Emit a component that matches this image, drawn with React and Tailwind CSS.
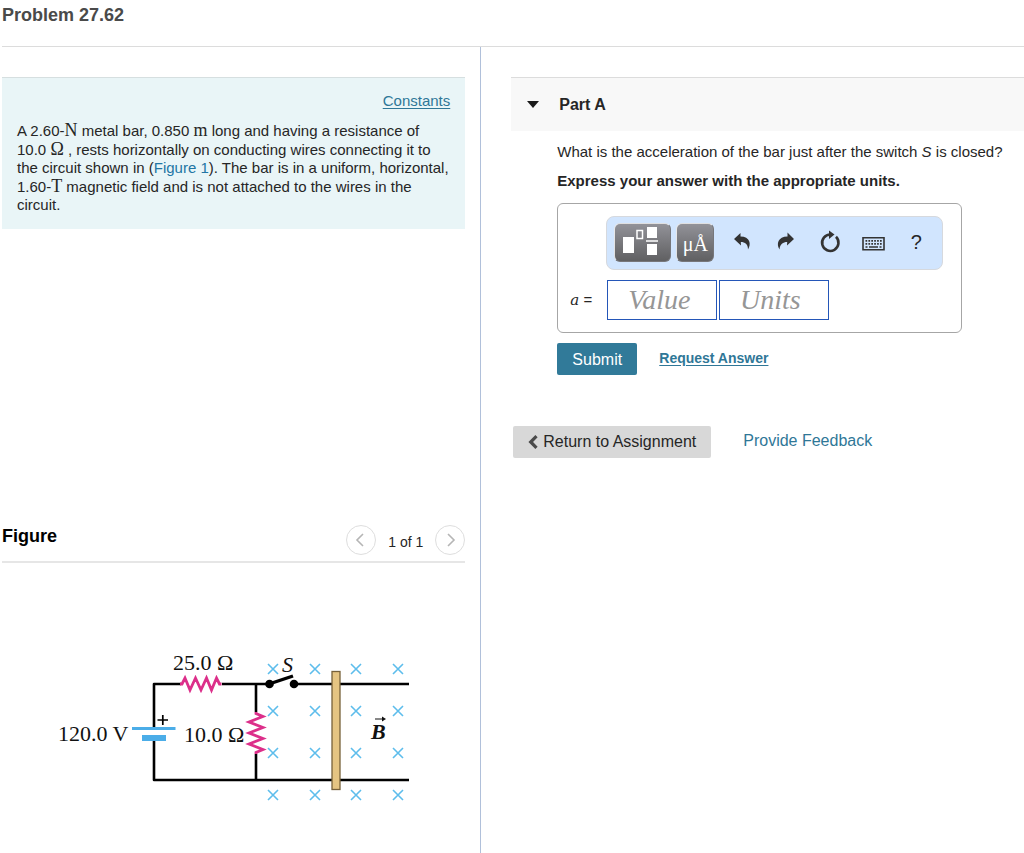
import React from 'react';

const FIELD_XS = [273, 315, 356, 398];
const FIELD_YS = [669, 711, 753, 795];

export default function App() {
  return (
    <div className="min-h-screen flex flex-col bg-white font-['Liberation_Sans',Arial,sans-serif] text-[#262626]">
      <header className="ml-0.5 h-[47px] pt-1 border-b border-[#dcdcdc]">
        <h1 className="text-lg leading-[22px] font-bold text-[#4a4a4a]">Problem 27.62</h1>
      </header>

      <main className="flex flex-1">
        <section className="w-[47%] shrink-0 border-r border-[#b0c0da] pl-0.5 pr-[15px]">
          <div className="min-h-[478px] pt-[30px]">
            <ProblemText />
          </div>
          <FigurePanel />
        </section>

        <section className="flex-1 min-w-0 pt-[30px] pl-[30px]">
          <PartA />
          <div className="mt-[51px] pl-0.5 flex items-center gap-8">
            <button className="h-8 px-[15px] flex items-center rounded-xs bg-[#d8d8d8] text-base">
              <svg width="10" height="14" viewBox="0 0 10 14" className="mr-[5px]" fill="none" stroke="#4a4a4a" strokeWidth="3.2">
                <path d="M8.5 1.2L2.7 7l5.8 5.8" />
              </svg>
              Return to Assignment
            </button>
            <a href="#feedback" className="text-base leading-[18px] pb-0.5 text-[#2f7797]">Provide Feedback</a>
          </div>
        </section>
      </main>
    </div>
  );
}

function Unit({ children }) {
  return <span className="font-['Liberation_Serif',serif] text-lg leading-[18px]">{children}</span>;
}

function ProblemText() {
  return (
    <div className="px-[15px] pt-3.5 pb-[15px] border-t border-[#d6dfe0] bg-[#e9f5f7]">
      <div className="mb-[11px] text-right text-[15px] leading-[18px]">
        <a href="#constants" className="text-[#2f7797] underline underline-offset-2">Constants</a>
      </div>
      <p className="text-[15px] leading-[18px]">
        A 2.60-<Unit>N</Unit> metal bar, 0.850 <Unit>m</Unit> long and having a resistance of
        10.0 <Unit>Ω</Unit> , rests horizontally on conducting wires connecting it to
        the circuit shown in (<a href="#figure" className="text-[#2276a4]">Figure 1</a>). The bar is in a
        uniform, horizontal, 1.60-<Unit>T</Unit> magnetic field and is not attached to the wires in the circuit.
      </p>
    </div>
  );
}

function FigurePanel() {
  return (
    <div id="figure">
      <div className="h-[38px] flex justify-between border-b-2 border-[#e6e6e6]">
        <h2 className="text-lg leading-[22px] font-bold text-black">Figure</h2>
        <div className="flex gap-3">
          <PageButton label="Previous figure" d="M15 7l-6 6 6 6" />
          <span className="pt-2 text-sm leading-[18px]">1 of 1</span>
          <PageButton label="Next figure" d="M11 7l6 6-6 6" />
        </div>
      </div>
      <div className="pt-[87px] flex justify-center">
        <Circuit />
      </div>
    </div>
  );
}

function PageButton({ label, d }) {
  return (
    <button aria-label={label} className="size-[30px] rounded-full border border-[#dedede] flex items-center justify-center">
      <svg width="26" height="26" viewBox="0 0 26 26" fill="none" stroke="#b5b5b5" strokeWidth="1.6">
        <path d={d} />
      </svg>
    </button>
  );
}

function Circuit() {
  return (
    <svg width="358" height="156" viewBox="55 650 358 156" fill="none" className="font-['Liberation_Serif',serif]">
      {/* wires */}
      <g stroke="#000" strokeWidth="2.6" strokeLinejoin="round">
        <path d="M181 684H154V728M154 740V780H409" />
        <path d="M222 684H270M294 684H409" />
        <path d="M256 684V712M256 754V780" />
        <path d="M269 684L293 676" strokeWidth="3.4" />
      </g>
      <circle cx="269.5" cy="684" r="4.3" fill="#000" />
      <circle cx="294" cy="684" r="4.3" fill="#000" />

      {/* resistors */}
      <g stroke="#dc2f8a" strokeWidth="2.8" strokeLinejoin="miter">
        <path d="M180 684h2l3-6 5 12 5.5-12 5.5 12 5.5-12 5 12 5-12 3 6h2" />
        <path d="M256 712v1.5l7 3-14 5.5 14 5.5-14 5.5 14 5.5-14 5.5 14 5.5-7 3v1.5" />
      </g>

      {/* battery */}
      <path d="M132 728.5H175.5" stroke="#4bade8" strokeWidth="3" />
      <path d="M142 738H166" stroke="#4bade8" strokeWidth="6" />
      <path d="M157.5 720H168M162.8 715V725" stroke="#000" strokeWidth="1.7" />

      {/* field into the page */}
      <g stroke="#5dbdec" strokeWidth="1.6">
        {FIELD_YS.map((y) => FIELD_XS.map((x) => (
          <path key={`${x}-${y}`} d={`M${x - 5} ${y - 5}l10 10M${x + 5} ${y - 5}l-10 10`} />
        )))}
      </g>

      {/* bar */}
      <rect x="332" y="671.5" width="8" height="118" fill="#e5c482" stroke="#77613a" strokeWidth="1.3" />

      <g fill="#111" fontSize="22">
        <text x="173" y="670">25.0 Ω</text>
        <text x="58" y="741">120.0 V</text>
        <text x="184" y="742">10.0 Ω</text>
        <text x="282" y="672" fontStyle="italic">S</text>
        <text x="371" y="739" fontStyle="italic" fontWeight="bold">B</text>
      </g>
      <path d="M375 719H384" stroke="#111" strokeWidth="1" />
      <path d="M382 716.5L386 719L382 721.5Z" fill="#111" />
    </svg>
  );
}

function PartA() {
  return (
    <div>
      <h2 className="h-[54px] flex items-center gap-5 pl-4 border-t border-[#dcdcdc] bg-[#f8f8f8] text-base font-bold">
        <button aria-label="Collapse Part A">
          <svg width="12" height="7" viewBox="0 0 12 7" fill="#1a1a1a"><path d="M0 0H12L6 7Z" /></svg>
        </button>
        Part A
      </h2>
      <div className="pt-3 pl-[46px] text-[15px] leading-[18px]">
        <p>What is the acceleration of the bar just after the switch <i>S</i> is closed?</p>
        <p className="mt-[11px] font-bold">Express your answer with the appropriate units.</p>
        <AnswerBox />
        <div className="mt-2.5 flex items-center gap-[22px]">
          <button className="h-8 w-20 rounded-xs bg-[#317a99] pt-px text-base text-white">Submit</button>
          <a href="#answer" className="pb-0.5 text-sm font-bold text-[#2f7797] underline underline-offset-2">Request Answer</a>
        </div>
      </div>
    </div>
  );
}

function AnswerBox() {
  return (
    <div className="mt-[13px] w-full max-w-[405px] rounded-md border border-[#a6a6a6] pt-3 pb-3 pl-3 pr-[18px]">
      <div className="ml-9 h-[54px] px-[7px] pb-0.5 flex items-center rounded-lg border border-[#d6d9de] bg-[#d1e5fe]">
        <button aria-label="Templates" className="w-[57px] h-[39px] mr-[5px] shrink-0 rounded-md border border-t-white/80 border-l-white/80 border-[#77777b] bg-linear-to-b from-[#929298] to-[#606062]">
          <svg width="55" height="37" viewBox="1 1 55 37" fill="none">
            <path d="M9 14h11v16H9zM33 4h10v11H33zM33 21h10v11H33z" fill="#fff" />
            <path d="M32 18h12" stroke="#fff" strokeWidth="1.5" />
            <path d="M23 7.5h5.5v8H23z" stroke="#fff" strokeWidth="1.5" />
          </svg>
        </button>
        <button aria-label="Units" className="w-[38px] h-[39px] mr-1.5 shrink-0 rounded-md border border-t-white/80 border-l-white/80 border-[#77777b] bg-linear-to-b from-[#929298] to-[#606062] pt-1 font-['Liberation_Serif',serif] text-xl leading-6 text-white">
          μÅ
        </button>
        <ToolButton label="Undo">
          <path d="M8.5 1L2 7L9 13.5L8.8 10C13 10 16 12 16 17.5C19.5 12 18 4.5 8.5 4.5Z" fill="#333" />
        </ToolButton>
        <ToolButton label="Redo">
          <path d="M11.5 0.5L18 7L11 13.5L11.2 10C7 10 4 12 3.5 17.5C0 12 2 4.5 11.5 4.5Z" fill="#333" />
        </ToolButton>
        <ToolButton label="Reset">
          <path d="M10.5 2.5A8.2 8.2 0 1 0 16 4.8" stroke="#333" strokeWidth="2.6" />
          <path d="M9 -1.5L14.5 2.5L9 7Z" fill="#333" />
        </ToolButton>
        <ToolButton label="Keyboard">
          <path d="M-1 5.8h21v12h-21z" stroke="#333" strokeWidth="1.6" />
          <path d="M1.5 8.8h16.5M1.5 11.8h16.5" stroke="#333" strokeWidth="1.8" strokeDasharray="1.7 1.2" />
          <path d="M1.5 15h2M5 15h9M15.5 15h2" stroke="#333" strokeWidth="1.5" />
        </ToolButton>
        <button aria-label="Help" className="w-10 shrink-0 text-xl leading-6">?</button>
      </div>
      <div className="mt-2.5 flex items-center">
        <span className="w-[37px] shrink-0 text-[15px]"><i className="font-['DejaVu_Serif',serif]">a</i> =</span>
        <input
          aria-label="Value"
          placeholder="Value"
          className="w-[110px] h-10 mr-0.5 pr-1.5 border border-[#2456b8] text-center font-['Liberation_Serif',serif] italic text-[28px] placeholder:text-[#969696]"
        />
        <input
          aria-label="Units"
          placeholder="Units"
          className="w-[110px] h-10 pr-2 border border-[#2456b8] text-center font-['Liberation_Serif',serif] italic text-[28px] placeholder:text-[#969696]"
        />
      </div>
    </div>
  );
}

function ToolButton({ label, children }) {
  return (
    <button aria-label={label} className="w-11 shrink-0 flex justify-center">
      <svg width="20" height="20" viewBox="0 0 20 20" fill="none" overflow="visible">{children}</svg>
    </button>
  );
}
